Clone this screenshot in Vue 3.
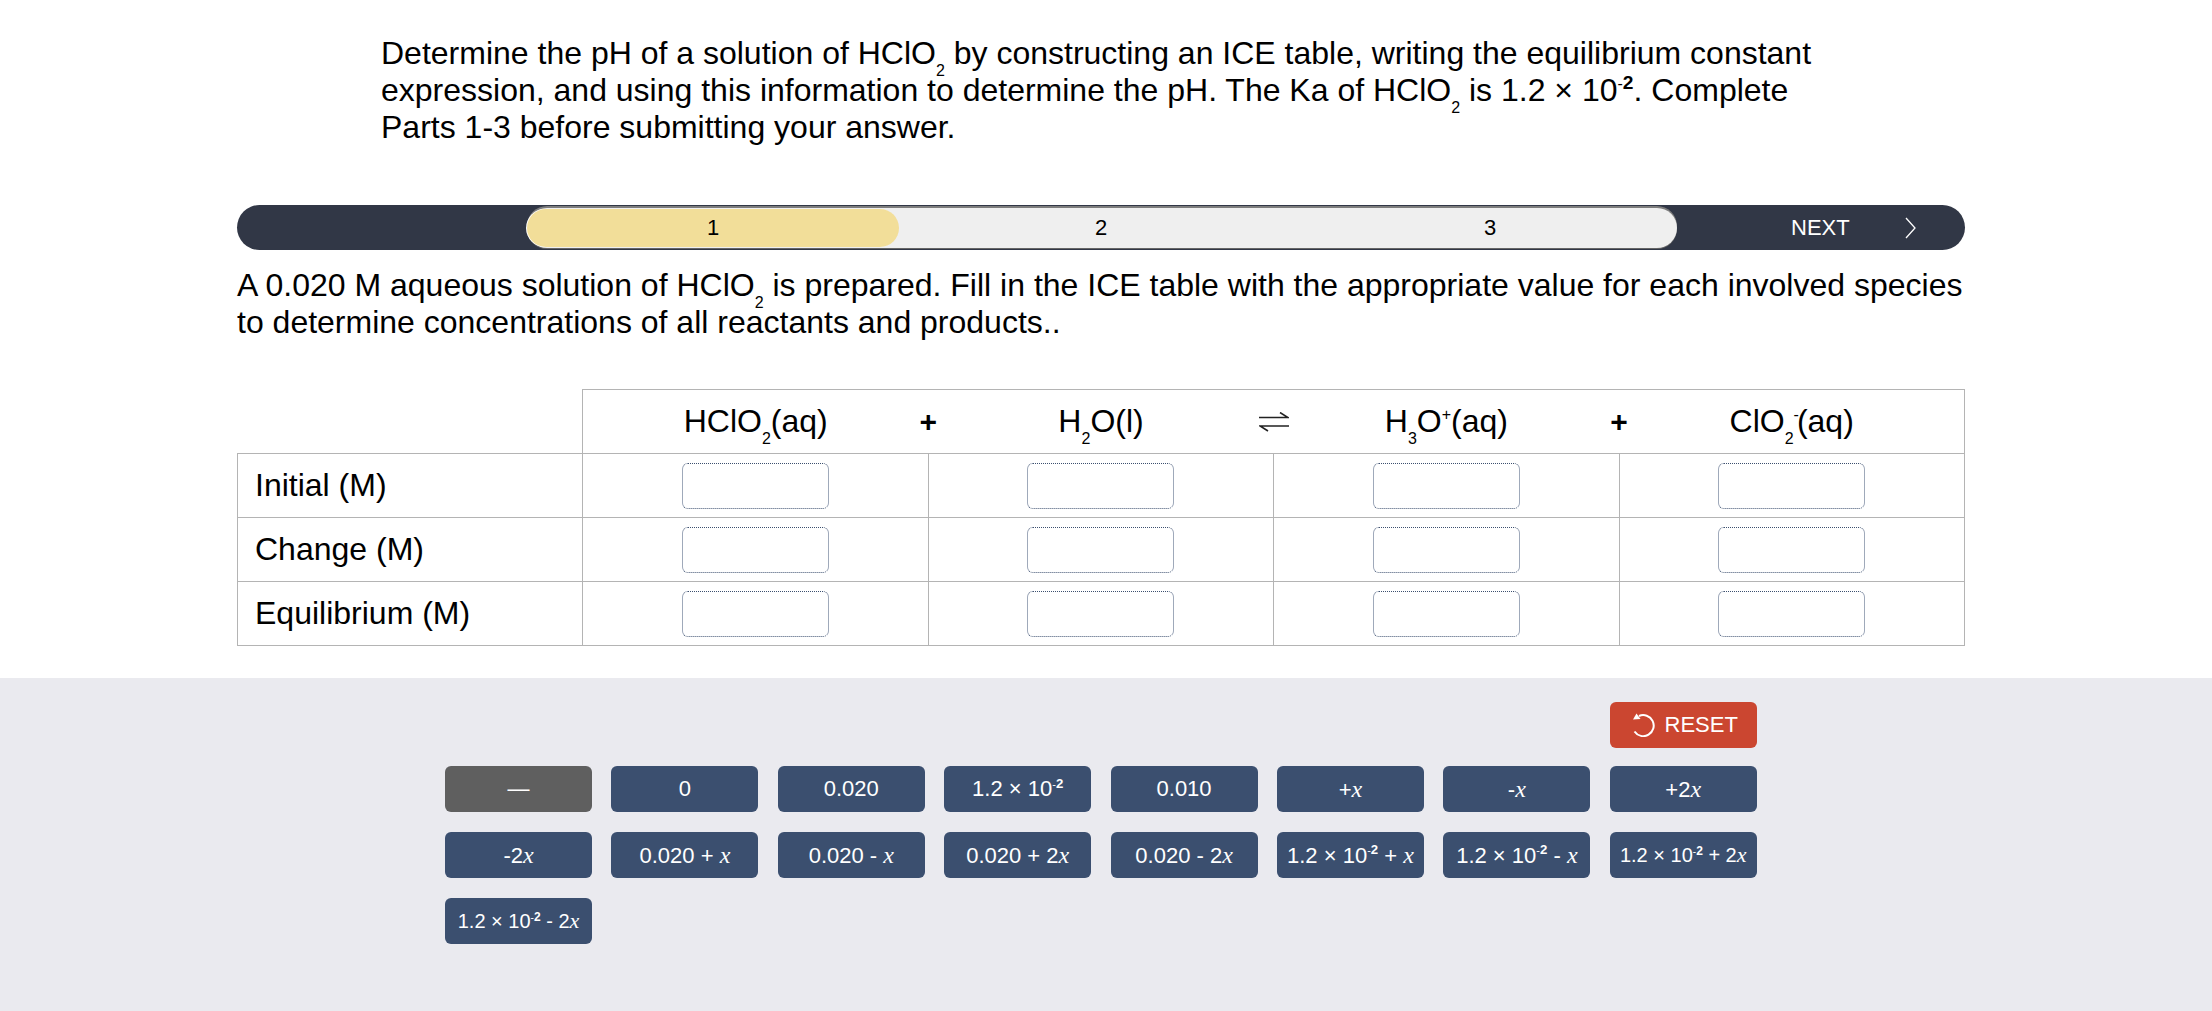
<template>
  <div class="page">
    <section class="top">
      <p class="intro">
        Determine the pH of a solution of HClO<sub>2</sub> by constructing an ICE table, writing the equilibrium constant
        expression, and using this information to determine the pH. The Ka of HClO<sub>2</sub> is 1.2 × 10<sup>-<b>2</b></sup>. Complete
        Parts 1-3 before submitting your answer.
      </p>

      <div class="stepper">
        <div class="steps">
          <div class="step active">1</div>
          <div class="step two">2</div>
          <div class="step three">3</div>
        </div>
        <div class="next">
          <span>NEXT</span>
          <svg class="chev" width="12" height="22" viewBox="0 0 12 22">
            <path d="M1 1l9 10-9 10" fill="none" stroke="#fff" stroke-width="1.3" />
          </svg>
        </div>
      </div>

      <p class="question">
        A 0.020 M aqueous solution of HClO<sub>2</sub> is prepared. Fill in the ICE table with the appropriate value for each involved species
        to determine concentrations of all reactants and products..
      </p>

      <table class="ice">
        <thead>
          <tr>
            <th class="blank"></th>
            <th colspan="4">
              <div class="equation">
                <span>HClO<sub>2</sub>(aq)</span>
                <span class="op">+</span>
                <span>H<sub>2</sub>O(l)</span>
                <svg class="eq-arrow" width="30" height="20" viewBox="0 0 30 20">
                  <path d="M0 5.500h29l-8-5M30 14H1l8 5" fill="none" stroke="#222" stroke-width="1.6" />
                </svg>
                <span>H<sub>3</sub>O<sup>+</sup>(aq)</span>
                <span class="op">+</span>
                <span>ClO<sub>2</sub><sup class="tight">-</sup>(aq)</span>
              </div>
            </th>
          </tr>
        </thead>
        <tbody>
          <tr v-for="row in rows" :key="row">
            <td class="label">{{ row }}</td>
            <td v-for="n in 4" :key="n" class="slot"><div class="drop"></div></td>
          </tr>
        </tbody>
      </table>
    </section>

    <section class="tray">
      <div class="tiles">
        <button class="tile reset">
          <svg width="24" height="24" viewBox="0 0 24 24">
            <path d="M8 3A10.500 10.500 0 1 1 3.500 18.500" fill="none" stroke="#fff" stroke-width="2" />
            <path d="M2 6.500L5.500.5l4 5.500z" fill="#fff" />
          </svg>
          RESET
        </button>
        <button v-for="t in tiles" :key="t.key" class="tile" :class="t.cls">
          {{ t.pre }}<template v-if="t.exp">10<sup>-<b>2</b></sup>{{ t.post }}</template><i v-if="t.x">x</i>
        </button>
      </div>
    </section>
  </div>
</template>

<script setup>
const rows = ["Initial (M)", "Change (M)", "Equilibrium (M)"];

const tiles = [
  { key: "dash", pre: "—", cls: "muted" },
  { key: "0", pre: "0" },
  { key: "020", pre: "0.020" },
  { key: "ka", pre: "1.2 × ", exp: true },
  { key: "010", pre: "0.010" },
  { key: "+x", pre: "+", x: true },
  { key: "-x", pre: "-", x: true },
  { key: "+2x", pre: "+2", x: true },
  { key: "-2x", pre: "-2", x: true },
  { key: "020+x", pre: "0.020 + ", x: true },
  { key: "020-x", pre: "0.020 - ", x: true },
  { key: "020+2x", pre: "0.020 + 2", x: true },
  { key: "020-2x", pre: "0.020 - 2", x: true },
  { key: "ka+x", pre: "1.2 × ", exp: true, post: " + ", x: true },
  { key: "ka-x", pre: "1.2 × ", exp: true, post: " - ", x: true },
  { key: "ka+2x", pre: "1.2 × ", exp: true, post: " + 2", x: true, cls: "small" },
  { key: "ka-2x", pre: "1.2 × ", exp: true, post: " - 2", x: true, cls: "small" },
];
</script>

<style>
html,
body {
  margin: 0;
  background: #fff;
}
</style>

<style scoped>
.page {
  width: 2212px;
  height: 1011px;
  overflow: hidden;
  display: flex;
  flex-direction: column;
  font-family: "Liberation Sans", Arial, sans-serif;
  color: #000;
}
.top {
  height: 678px;
  padding: 35px 0 0 237px;
  box-sizing: border-box;
}
p {
  margin: 0;
  font-size: 32px;
  line-height: 37px;
}
.intro {
  margin-left: 144px;
  width: 1470px;
}
sub,
sup {
  line-height: 0;
  font-size: 50%;
}
sub {
  vertical-align: -0.75em;
}
sup {
  vertical-align: 0.75em;
}
sup b {
  font-size: 120%;
}
.tight {
  margin-right: -2px;
}
.stepper {
  margin-top: 59px;
  width: 1728px;
  height: 45px;
  border-radius: 23px;
  background: #313746;
  display: flex;
  align-items: center;
  justify-content: flex-end;
}
.steps {
  display: flex;
  width: 1150px;
  height: 40px;
  border-radius: 20px;
  background: #efefef;
  box-shadow: 0 -2px 0 #7d7d7d, 0 1px 0 #666;
  font-size: 22px;
}
.step {
  display: flex;
  align-items: center;
  justify-content: center;
}
.active {
  width: 372px;
  margin: 1px 0;
  border-radius: 20px;
  background: #f2de99;
  box-shadow: -1px 0 0 #fff;
}
.two {
  width: 404px;
}
.three {
  width: 374px;
}
.next {
  width: 288px;
  height: 100%;
  display: flex;
  align-items: center;
  color: #fff;
  font-size: 22px;
  box-sizing: border-box;
  padding-left: 114px;
  gap: 55px;
}
.question {
  margin-top: 17px;
  width: 1745px;
}
.ice {
  margin-top: 48px;
  width: 1728px;
  table-layout: fixed;
  border-collapse: collapse;
  font-size: 32px;
}
.ice th,
.ice td {
  border: 1px solid #b4b4b4;
  padding: 0;
  height: 64px;
  box-sizing: border-box;
}
.ice th {
  font-weight: 400;
}
.ice th.blank {
  border-top: none;
  border-left: none;
}
.equation {
  display: grid;
  grid-template-columns: repeat(7, 1fr);
  padding: 0 86px;
  justify-items: center;
  align-items: center;
}
.equation span {
  white-space: nowrap;
}
.op {
  font-size: 30px;
  font-weight: 700;
}
.ice .label {
  padding-left: 17px;
}
.drop {
  width: 147px;
  height: 46px;
  margin: 0 auto;
  box-sizing: border-box;
  border: 1px dotted #3b4f6f;
  border-left: 1px solid #9fa9ba;
  border-right: 1px solid #9fa9ba;
  border-radius: 6px;
  background: #fff;
}
.tray {
  flex: 1;
  background: #eaeaef;
  padding: 24px 0 0 445px;
}
.tiles {
  display: grid;
  grid-template-columns: repeat(8, 147px);
  gap: 20px 19.4px;
}
.tile {
  height: 46px;
  border: none;
  border-radius: 6px;
  padding: 0;
  background: #3b4f6f;
  color: #fff;
  font-family: "Liberation Sans", Arial, sans-serif;
  font-size: 22px;
  white-space: nowrap;
}
.tile i {
  font-family: "Liberation Serif", "Times New Roman", serif;
  font-size: 24px;
}
.tile.small {
  font-size: 20px;
}
.tile.small i {
  font-size: 22px;
}
.tile.muted {
  background: #5f5f5f;
}
.reset {
  grid-column: 8;
  margin-bottom: -2px;
  background: #cb4630;
  display: flex;
  align-items: center;
  justify-content: center;
  gap: 10px;
  padding-left: 2px;
}
</style>
